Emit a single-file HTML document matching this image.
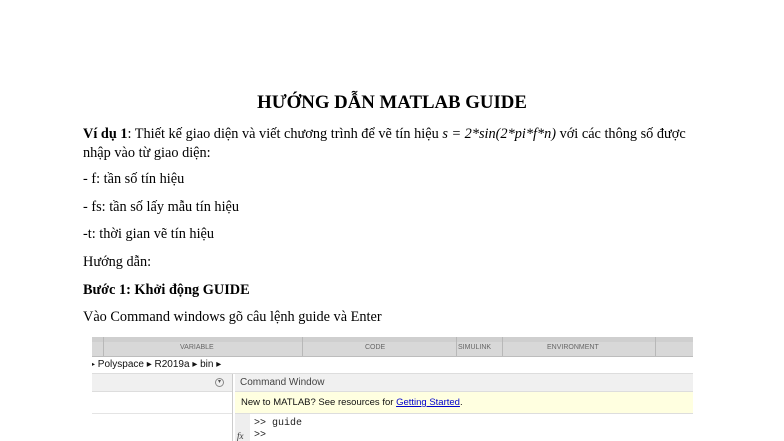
<!DOCTYPE html>
<html><head><meta charset="utf-8"><style>
body{margin:0;width:784px;height:441px;background:#fff;position:relative;overflow:hidden;font-family:"Liberation Serif",serif;color:#000}
.t{position:absolute;font-size:14.3px;white-space:nowrap;line-height:16px}
.s{position:absolute;font-family:"Liberation Sans",sans-serif;white-space:nowrap}
</style></head><body>
<div class="t" style="left:0;width:784px;text-align:center;top:93px;font-size:18.8px;font-weight:bold;line-height:20px">HƯỚNG DẪN MATLAB GUIDE</div>
<div class="t" style="left:83px;top:126px"><b>Ví dụ 1</b>: Thiết kế giao diện và viết chương trình để vẽ tín hiệu <i>s = 2*sin(2*pi*f*n)</i> với các thông số được</div>
<div class="t" style="left:83px;top:145px">nhập vào từ giao diện:</div>
<div class="t" style="left:83px;top:171px">- f: tần số tín hiệu</div>
<div class="t" style="left:83px;top:199px">- fs: tần số lấy mẫu tín hiệu</div>
<div class="t" style="left:83px;top:226px">-t: thời gian vẽ tín hiệu</div>
<div class="t" style="left:83px;top:254px">Hướng dẫn:</div>
<div class="t" style="left:83px;top:282px"><b>Bước 1: Khởi động GUIDE</b></div>
<div class="t" style="left:83px;top:309px">Vào Command windows gõ câu lệnh guide và Enter</div>

<div style="position:absolute;left:92px;top:337px;width:601px;height:104px;background:#fff;overflow:hidden">
 <div style="position:absolute;left:0;top:0;width:601px;height:5px;background:#cfcfcf"></div>
 <div style="position:absolute;left:0;top:5px;width:601px;height:14px;background:#d8d8d8;border-bottom:1px solid #bdbdbd"></div>
 <div style="position:absolute;left:11px;top:0;width:1px;height:19px;background:#b8b8b8"></div>
 <div style="position:absolute;left:210px;top:0;width:1px;height:19px;background:#b8b8b8"></div>
 <div style="position:absolute;left:364px;top:0;width:1px;height:19px;background:#b8b8b8"></div>
 <div style="position:absolute;left:410px;top:0;width:1px;height:19px;background:#b8b8b8"></div>
 <div style="position:absolute;left:563px;top:0;width:1px;height:19px;background:#b8b8b8"></div>
 <div class="s" style="left:88px;top:7px;font-size:7px;color:#666">VARIABLE</div>
 <div class="s" style="left:273px;top:7px;font-size:7px;color:#666">CODE</div>
 <div class="s" style="left:366px;top:7px;font-size:7px;color:#666">SIMULINK</div>
 <div class="s" style="left:455px;top:7px;font-size:7px;color:#666">ENVIRONMENT</div>
 <div class="s" style="left:-2px;top:22px;font-size:10px;color:#111">▸ Polyspace ▸ R2019a ▸ bin ▸</div>
 <div style="position:absolute;left:0;top:36px;width:601px;height:1px;background:#ddd"></div>
 <div style="position:absolute;left:0;top:37px;width:140px;height:17px;background:#f0f0f0;border-bottom:1px solid #ddd"></div>
 <div style="position:absolute;left:123px;top:41px;width:7px;height:7px;border:1px solid #888;border-radius:50%;font-size:6px;line-height:7px;text-align:center;color:#555">▾</div>
 <div style="position:absolute;left:140px;top:37px;width:1px;height:67px;background:#ccc"></div>
 <div style="position:absolute;left:0;top:76px;width:140px;height:1px;background:#e4e4e4"></div>
 <div style="position:absolute;left:143px;top:37px;width:458px;height:17px;background:#f0f0f0;border-bottom:1px solid #ddd"></div>
 <div class="s" style="left:148px;top:40px;font-size:10px;color:#444">Command Window</div>
 <div style="position:absolute;left:143px;top:55px;width:458px;height:21px;background:#ffffe0;border-bottom:1px solid #ddd"></div>
 <div class="s" style="left:149px;top:60px;font-size:9.5px;color:#111">New to MATLAB? See resources for <span style="color:#00c;text-decoration:underline">Getting Started</span>.</div>
 <div style="position:absolute;left:143px;top:77px;width:15px;height:27px;background:#eee"></div>
 <div class="s" style="left:162px;top:81px;font-size:10px;font-family:'Liberation Mono',monospace;color:#222">&gt;&gt; guide</div>
 <div class="s" style="left:145px;top:94px;font-size:9px;font-family:'Liberation Serif',serif;font-style:italic;color:#333">fx</div>
 <div class="s" style="left:162px;top:93px;font-size:10px;font-family:'Liberation Mono',monospace;color:#222">&gt;&gt;</div>
</div>
</body></html>
